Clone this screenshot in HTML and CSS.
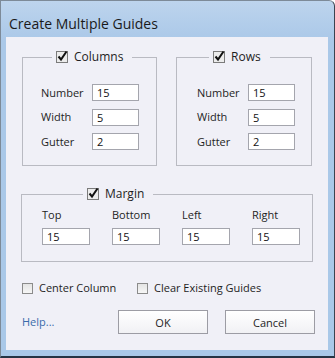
FILE: index.html
```html
<!DOCTYPE html>
<html>
<head>
<meta charset="utf-8">
<link rel="stylesheet" href="styles.css">
</head>
<body>
<div class="window">
  <div class="titlebar">Create Multiple Guides</div>
  <div class="content">
    <div class="top-row">
      <fieldset class="group group-cols">
        <legend class="legend legend-cols">
          <svg class="cb" width="13" height="13" viewBox="0 0 13 13"><rect x="0.5" y="1.5" width="11" height="11" fill="#ececec" stroke="#7b7b7b"/><path d="M2.5 6.5 L5 9.5 L10.5 1.5" fill="none" stroke="#111" stroke-width="2"/></svg>
          <span>Columns</span>
        </legend>
        <div class="fields">
          <span class="lbl">Number</span><span class="inp">15</span>
          <span class="lbl">Width</span><span class="inp">5</span>
          <span class="lbl">Gutter</span><span class="inp">2</span>
        </div>
      </fieldset>
      <fieldset class="group group-rows">
        <legend class="legend legend-rows">
          <svg class="cb" width="13" height="13" viewBox="0 0 13 13"><rect x="0.5" y="1.5" width="11" height="11" fill="#ececec" stroke="#7b7b7b"/><path d="M2.5 6.5 L5 9.5 L10.5 1.5" fill="none" stroke="#111" stroke-width="2"/></svg>
          <span>Rows</span>
        </legend>
        <div class="fields">
          <span class="lbl">Number</span><span class="inp">15</span>
          <span class="lbl">Width</span><span class="inp">5</span>
          <span class="lbl">Gutter</span><span class="inp">2</span>
        </div>
      </fieldset>
    </div>
    <fieldset class="group group-margin">
      <legend class="legend legend-margin">
        <svg class="cb" width="13" height="13" viewBox="0 0 13 13"><rect x="0.5" y="1.5" width="11" height="11" fill="#ececec" stroke="#7b7b7b"/><path d="M2.5 6.5 L5 9.5 L10.5 1.5" fill="none" stroke="#111" stroke-width="2"/></svg>
        <span>Margin</span>
      </legend>
      <div class="margins">
        <div class="mcol"><span class="lbl">Top</span><span class="inp minp">15</span></div>
        <div class="mcol"><span class="lbl">Bottom</span><span class="inp minp">15</span></div>
        <div class="mcol"><span class="lbl">Left</span><span class="inp minp">15</span></div>
        <div class="mcol"><span class="lbl">Right</span><span class="inp minp">15</span></div>
      </div>
    </fieldset>
    <div class="opts">
      <label class="opt opt-center"><span class="box"></span>Center Column</label>
      <label class="opt"><span class="box"></span>Clear Existing Guides</label>
    </div>
    <div class="actions">
      <a class="help">Help...</a>
      <button class="btn btn-ok">OK</button>
      <button class="btn">Cancel</button>
    </div>
  </div>
</div>
</body>
</html>
```

FILE: styles.css
```css
* { box-sizing: border-box; }
html, body { margin: 0; padding: 0; }
body {
  width: 335px;
  height: 358px;
  overflow: hidden;
  font-family: "Open Sans", "Noto Sans", sans-serif;
  font-size: 11px;
  color: #1e1e1e;
}
.window {
  width: 335px;
  height: 358px;
  border: 1px solid #7d8a98;
  border-right-color: #3a4350;
  border-bottom: 2px solid #253444;
  border-top-right-radius: 6px;
  background: linear-gradient(#bdd4ed, #aac8e8 40px, #a9c8e8);
  display: flex;
  flex-direction: column;
}
.titlebar {
  height: 36px;
  padding: 14px 0 0 8px;
  font-size: 14px;
  line-height: 18px;
  color: #1a1a1a;
}
.content {
  margin-left: 5px;
  width: 322px;
  height: 313px;
  background: #f0f0f7;
  padding: 14px 0 0 0;
}
.top-row {
  display: flex;
  gap: 19px;
  padding-left: 16px;
}
.group {
  margin: 0;
  padding: 0;
  border: 1px solid #b9bac2;
  min-width: 0;
}
.group-cols { width: 135px; }
.group-rows { width: 136px; }
.legend {
  display: flex;
  align-items: center;
  gap: 5px;
  height: 12px;
  line-height: 12px;
  padding: 0 4px;
  font-size: 12px;
}
.legend-cols { margin-left: 29px; padding-right: 9px; }
.legend-rows { margin-left: 32px; padding-right: 9px; }
.legend-margin { margin-left: 61px; padding-right: 9px; }
.cb { display: block; margin-top: -2px; }
.fields {
  display: grid;
  grid-template-columns: 51px 47px;
  row-gap: 7.5px;
  align-items: center;
  padding: 21px 0 15px 18px;
}
.group-rows .fields { padding-left: 20px; }
.lbl { line-height: 16px; white-space: nowrap; }
.inp {
  display: block;
  height: 17px;
  width: 47px;
  border: 1px solid #a4a5ad;
  background: #fff;
  padding-left: 4px;
  line-height: 15px;
  font-size: 11px;
  color: #111;
}
.group-margin {
  margin: 22px 0 0 15px;
  width: 292px;
}
.margins {
  display: grid;
  grid-template-columns: 70px 70px 70px 48px;
  padding: 7px 0 16px 20px;
}
.mcol {
  display: flex;
  flex-direction: column;
  gap: 5px;
}
.minp { width: 48px; }
.opts {
  display: flex;
  margin: 18px 0 0 16px;
  height: 16px;
  align-items: center;
}
.opt {
  display: flex;
  align-items: center;
  gap: 6px;
  line-height: 16px;
}
.opt-center { width: 115px; }
.box {
  width: 11px;
  height: 11px;
  border: 1px solid #8b8b8b;
  background: linear-gradient(#e4e4e4, #f6f6f6);
}
.actions {
  display: flex;
  align-items: center;
  margin: 14px 0 0 16px;
}
.help {
  color: #3a6bab;
  width: 96px;
  line-height: 16px;
}
.btn {
  width: 90px;
  height: 24px;
  border: 1px solid #9c9ca4;
  background: linear-gradient(#ffffff, #f1f1f4);
  font-family: inherit;
  font-size: 11px;
  color: #1e1e1e;
  padding: 0;
}
.btn-ok { margin-right: 17px; }
```
